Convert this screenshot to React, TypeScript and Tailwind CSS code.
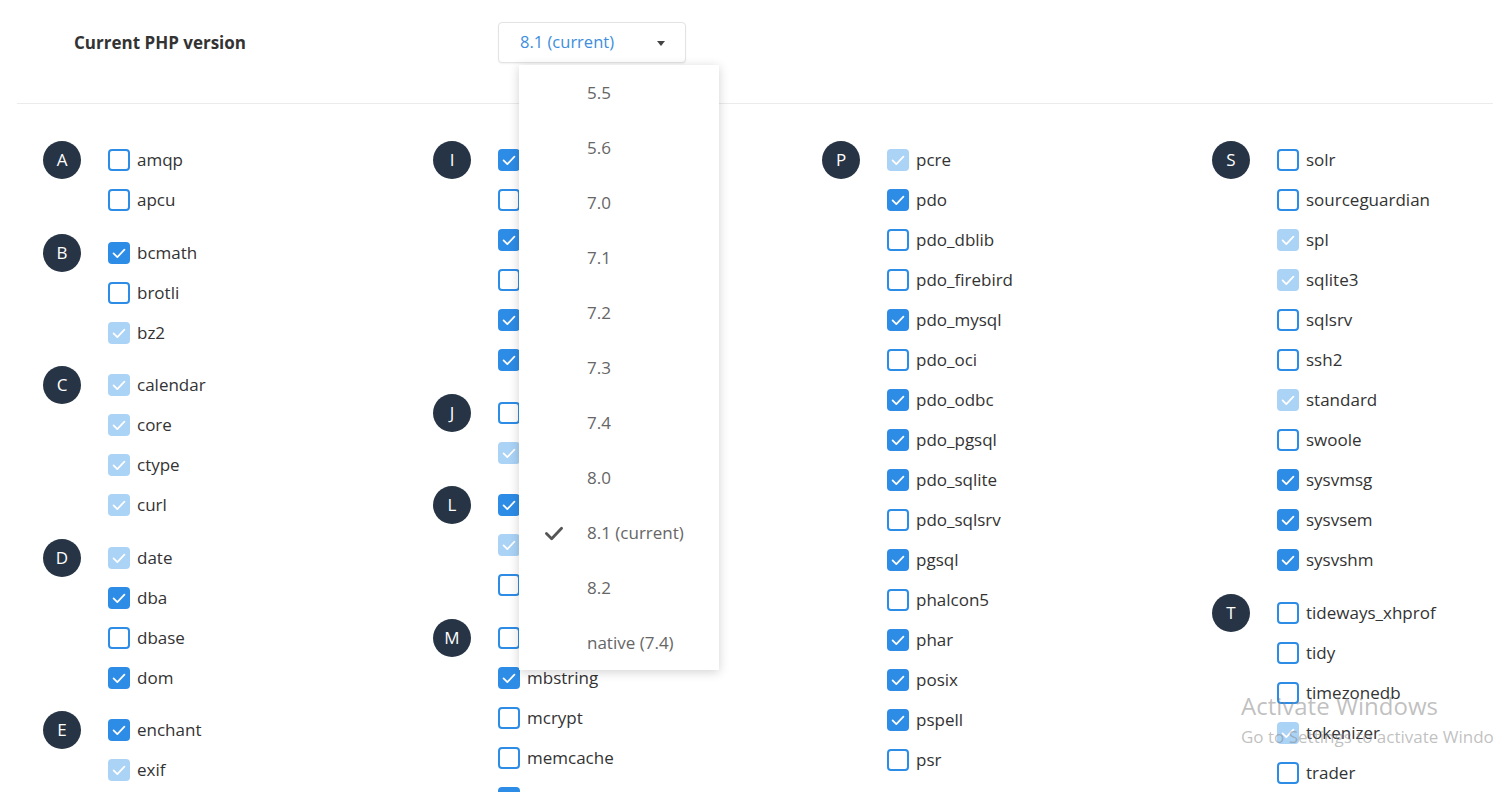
import React from 'react';

type State = 'on' | 'off' | 'locked';

interface Ext {
  name: string;
  state: State;
}

interface Group {
  letter: string;
  items: Ext[];
}

const e = (name: string, state: State = 'off'): Ext => ({ name, state });

const columns: Group[][] = [
  [
    { letter: 'A', items: [e('amqp'), e('apcu')] },
    { letter: 'B', items: [e('bcmath', 'on'), e('brotli'), e('bz2', 'locked')] },
    {
      letter: 'C',
      items: [e('calendar', 'locked'), e('core', 'locked'), e('ctype', 'locked'), e('curl', 'locked')],
    },
    { letter: 'D', items: [e('date', 'locked'), e('dba', 'on'), e('dbase'), e('dom', 'on')] },
    { letter: 'E', items: [e('enchant', 'on'), e('exif', 'locked')] },
  ],
  [
    {
      letter: 'I',
      items: [
        e('igbinary', 'on'),
        e('imagick'),
        e('imap', 'on'),
        e('inotify'),
        e('intl', 'on'),
        e('ioncube_loader', 'on'),
      ],
    },
    { letter: 'J', items: [e('jsmin'), e('json', 'locked')] },
    { letter: 'L', items: [e('ldap', 'on'), e('libxml', 'locked'), e('lzf')] },
    {
      letter: 'M',
      items: [e('mailparse'), e('mbstring', 'on'), e('mcrypt'), e('memcache'), e('memcached', 'on')],
    },
  ],
  [
    {
      letter: 'P',
      items: [
        e('pcre', 'locked'),
        e('pdo', 'on'),
        e('pdo_dblib'),
        e('pdo_firebird'),
        e('pdo_mysql', 'on'),
        e('pdo_oci'),
        e('pdo_odbc', 'on'),
        e('pdo_pgsql', 'on'),
        e('pdo_sqlite', 'on'),
        e('pdo_sqlsrv'),
        e('pgsql', 'on'),
        e('phalcon5'),
        e('phar', 'on'),
        e('posix', 'on'),
        e('pspell', 'on'),
        e('psr'),
      ],
    },
    { letter: 'R', items: [e('raphf'), e('rar')] },
  ],
  [
    {
      letter: 'S',
      items: [
        e('solr'),
        e('sourceguardian'),
        e('spl', 'locked'),
        e('sqlite3', 'locked'),
        e('sqlsrv'),
        e('ssh2'),
        e('standard', 'locked'),
        e('swoole'),
        e('sysvmsg', 'on'),
        e('sysvsem', 'on'),
        e('sysvshm', 'on'),
      ],
    },
    {
      letter: 'T',
      items: [e('tideways_xhprof'), e('tidy'), e('timezonedb'), e('tokenizer', 'locked'), e('trader')],
    },
  ],
];

const versions = ['5.5', '5.6', '7.0', '7.1', '7.2', '7.3', '7.4', '8.0', '8.1 (current)', '8.2', 'native (7.4)'];

function Check({ className, width = 2.4 }: { className?: string; width?: number }) {
  return (
    <svg viewBox="0 0 24 24" className={className} fill="none" stroke="currentColor" strokeWidth={width}>
      <path d="M5.5 12.5l4.5 4.5 8.5-9" strokeLinecap="round" strokeLinejoin="round" />
    </svg>
  );
}

function Checkbox({ state }: { state: State }) {
  if (state === 'off') {
    return <span className="h-[22px] w-[22px] shrink-0 rounded-[4px] border-2 border-[#2d8ce6] bg-white" />;
  }
  return (
    <span
      className={
        state === 'on'
          ? 'flex h-[22px] w-[22px] shrink-0 items-center justify-center rounded-[4px] bg-[#2d8ce6] text-white'
          : 'flex h-[22px] w-[22px] shrink-0 items-center justify-center rounded-[4px] bg-[#abd3f6] text-white'
      }
    >
      <Check className="h-[20px] w-[20px]" width={2.1} />
    </span>
  );
}

function LetterGroup({ group }: { group: Group }) {
  return (
    <div className="flex">
      <div className="flex h-10 w-[65px] shrink-0 items-center">
        <span className="flex h-[38px] w-[38px] items-center justify-center rounded-full bg-[#263445] text-[17px] text-white">
          {group.letter}
        </span>
      </div>
      <ul className="flex flex-col">
        {group.items.map((item) => (
          <li key={item.name} className="flex h-10 items-center gap-[7px] text-[17px] text-[#333]">
            <Checkbox state={item.state} />
            <span>{item.name}</span>
          </li>
        ))}
      </ul>
    </div>
  );
}

export default function App() {
  return (
    <div className="relative h-[792px] w-[1494px] overflow-hidden bg-white font-['Open_Sans',sans-serif]">
      <div className="flex h-[103px] items-start pl-[74px] pt-[22px]">
        <div className="flex h-[41px] w-[424px] items-center text-[17px] font-bold text-[#333]">
          Current PHP version
        </div>
        <div className="relative">
          <button className="flex h-[41px] w-[188px] items-center justify-between rounded-[4px] border border-[#e3e3e3] bg-white pl-[21px] pr-[20px] text-[16.5px] text-[#3d8edc] shadow-[0_1px_2px_rgba(0,0,0,0.06)]">
            <span>8.1 (current)</span>
            <span className="mt-[2px] h-0 w-0 border-x-[4.5px] border-t-[5px] border-x-transparent border-t-[#444]" />
          </button>
          <div className="absolute left-[21px] top-[43px] z-20 w-[200px] bg-white shadow-[0_2px_10px_rgba(0,0,0,0.18)]">
            {versions.map((v) => (
              <div key={v} className="relative flex h-[55px] items-center pl-[68px] text-[17px] text-[#666]">
                {v === '8.1 (current)' && (
                  <Check className="absolute left-[21px] top-[14px] h-[28px] w-[28px] text-[#555]" />
                )}
                {v}
              </div>
            ))}
          </div>
        </div>
      </div>
      <div className="ml-[17px] mr-[1px] border-t border-[#ebebeb]" />
      <div className="grid grid-cols-[390px_389px_390px_1fr] pl-[43px] pt-[36px]">
        {columns.map((col, i) => (
          <div key={i} className="flex flex-col gap-[12.5px]">
            {col.map((g) => (
              <LetterGroup key={g.letter} group={g} />
            ))}
          </div>
        ))}
      </div>
      <div className="pointer-events-none absolute left-[1241px] top-[690px] z-30 whitespace-nowrap font-['Open_Sans',sans-serif] text-[rgba(130,130,130,0.5)]">
        <div className="text-[24px] leading-[32px]">Activate Windows</div>
        <div className="mt-[3px] text-[17px] leading-[24px]">Go to Settings to activate Windows.</div>
      </div>
    </div>
  );
}
